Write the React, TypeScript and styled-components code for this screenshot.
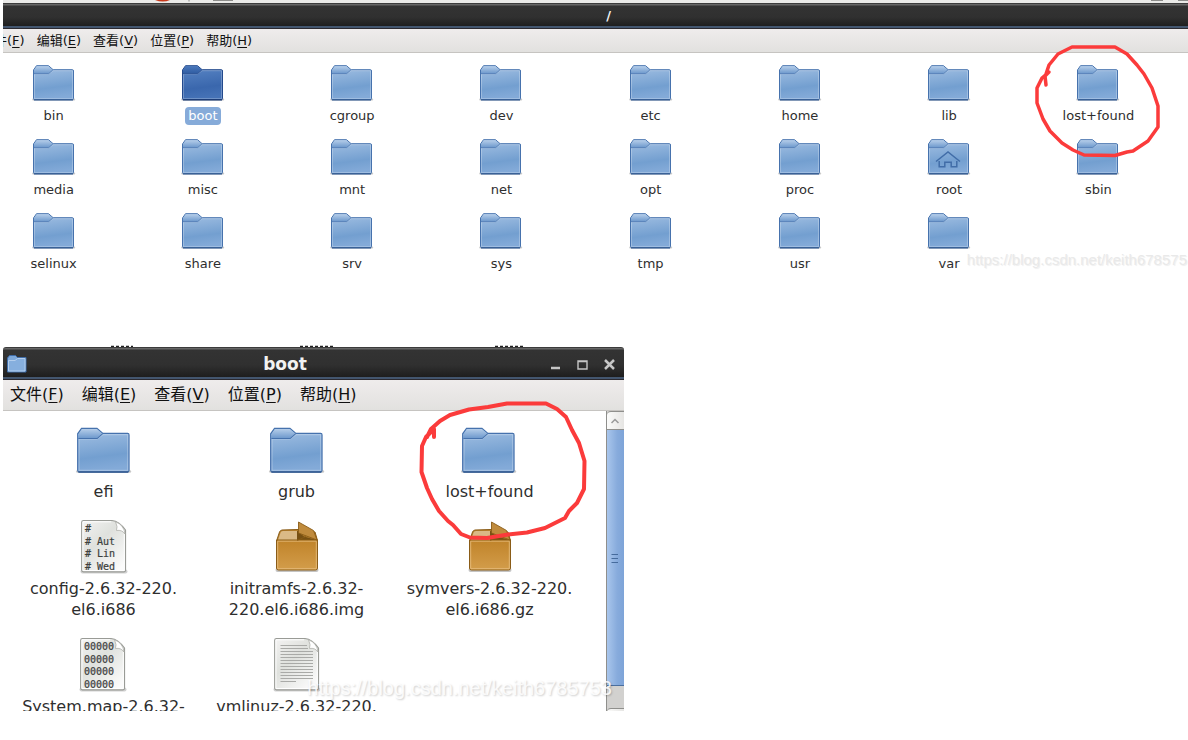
import React from 'react';
import styled, { createGlobalStyle, css } from 'styled-components';

const GlobalStyle = createGlobalStyle`
  * { box-sizing: border-box; }
  body {
    margin: 0;
    background: #fff;
    color: #2e2e2e;
    font-family: "DejaVu Sans", "Noto Sans CJK SC", sans-serif;
    overflow-x: hidden;
  }
  button { font: inherit; color: inherit; border: 0; padding: 0; background: none; }
  ul { list-style: none; margin: 0; padding: 0; }
  svg { display: block; }
`;

type Size = 'small' | 'large';

const Desktop = styled.main`
  padding-left: 3px;
`;

const PanelEdge = styled.div`
  height: 3px;
  background: #eaeae8;
  overflow: hidden;
`;

const Window = styled.section<{ $size: Size }>`
  position: relative;
  ${p => (p.$size === 'large' ? css`width: 52.4%;` : css`min-height: 344px;`)}
`;

const TitleBar = styled.header<{ $size: Size }>`
  display: flex;
  align-items: center;
  height: ${p => (p.$size === 'large' ? 33 : 26)}px;
  padding-left: ${p => (p.$size === 'large' ? 4 : 26)}px;
  border-top: 1px solid #3c3c3c;
  border-bottom: 1px solid #2c2a30;
  border-radius: ${p => (p.$size === 'large' ? '3px 3px 0 0' : 0)};
  background: linear-gradient(#666 0 1px, #333 2px, #303030 55%, #1b1b1b 100%);
  box-shadow: inset 0 -2px 0 #43566f;
  color: #f2f2f2;
`;

const Title = styled.h1<{ $size: Size }>`
  flex: 1;
  margin: 0;
  text-align: center;
  font-size: ${p => (p.$size === 'large' ? 17 : 13)}px;
  line-height: 24px;
  font-weight: bold;
`;

const WindowButtons = styled.div`
  display: flex;
`;

const WindowButton = styled.button`
  display: grid;
  place-items: center;
  width: 27px;
  height: 24px;
`;

const MenuBar = styled.nav<{ $size: Size }>`
  display: flex;
  align-items: center;
  overflow: hidden;
  gap: ${p => (p.$size === 'large' ? 18 : 12)}px;
  height: ${p => (p.$size === 'large' ? 31 : 24)}px;
  padding-left: ${p => (p.$size === 'large' ? 7 : 0)}px;
  background: linear-gradient(#efecec, #e2e1df);
  border-bottom: 1px solid #c6c4c1;
  font-size: ${p => (p.$size === 'large' ? 16 : 13)}px;
  color: #111;
`;

const MenuItem = styled.button`
  flex: none;
  line-height: 20px;
  white-space: nowrap;
`;

const MenuScroll = styled.div`
  display: flex;
  gap: inherit;
  margin-left: -22px;
`;

const Mnemonic = styled.u`
  text-underline-offset: 2px;
`;

const SmallGrid = styled.ul`
  display: grid;
  grid-template-columns: repeat(8, 1fr);
  row-gap: 14px;
  margin: 0 15px 0 -24px;
  padding-top: 12px;
`;

const SmallCell = styled.li`
  position: relative;
  display: flex;
  justify-content: center;
`;

const FileButton = styled.button<{ $size: Size }>`
  display: flex;
  flex-direction: column;
  align-items: center;
  gap: ${p => (p.$size === 'large' ? 0 : 6)}px;
`;

const SmallLabel = styled.span<{ $selected?: boolean }>`
  padding: 0 3px;
  border-radius: 4px;
  font-size: 13px;
  line-height: 18px;
  ${p => p.$selected && css`background: #86abd9; color: #fff;`}
`;

const LargeLabel = styled.span`
  font-size: 16px;
  line-height: 21px;
  white-space: pre-line;
`;

const Pane = styled.div`
  display: flex;
  height: 300px;
  overflow: hidden;
`;

const LargeGrid = styled.ul`
  flex: 1;
  display: grid;
  grid-template-columns: repeat(3, 193px);
  align-content: start;
  row-gap: 16px;
  padding: 10px 0 0 4px;
`;

const LargeCell = styled.li`
  display: flex;
  justify-content: center;
`;

const ScrollBar = styled.div`
  display: flex;
  flex-direction: column;
  width: 18px;
  border-left: 1px solid #8f8f8c;
  background: #d2d1cf;
`;

const ScrollArrow = styled.button`
  display: grid;
  place-items: center;
  flex: none;
  height: 19px;
  border-top: 1px solid #8f8f8c;
  border-bottom: 1px solid #8f8f8c;
  border-radius: 4px 0 0 0;
  background: linear-gradient(90deg, #fbfbfa, #e6e5e3);
`;

const ScrollThumb = styled.div`
  display: grid;
  place-items: center;
  flex: none;
  height: 256px;
  border-bottom: 1px solid #4b6f9f;
  background: linear-gradient(90deg, #a9c6ec, #87abdc 60%, #7ea4d8);
`;

const ScrollTrack = styled.div`
  flex: none;
  height: 22px;
`;

const Mark = styled.svg<{ $left: number; $top: number }>`
  position: absolute;
  z-index: 2;
  left: ${p => p.$left}px;
  top: ${p => p.$top}px;
  pointer-events: none;
`;

const Watermark = styled.span<{ $size: Size }>`
  position: absolute;
  white-space: nowrap;
  font-family: "Liberation Sans", sans-serif;
  pointer-events: none;
  ${p =>
    p.$size === 'large'
      ? css`right: 12px; bottom: 12px; font-size: 20px; line-height: 22px;
            color: rgba(255, 255, 255, 0.85); text-shadow: 1px 1px 2px rgba(0, 0, 0, 0.2);`
      : css`right: 1px; top: 248px; font-size: 15px; line-height: 18px;
            color: #e9e9e9; text-shadow: 1px 1px 1px #eee;`}
`;

const FolderIcon = ({ size = 'small', active, home }: { size?: Size; active?: boolean; home?: boolean }) => {
  const id = `folder-${size}-${active ? 'on' : 'off'}`;
  const stroke = active ? '#23498c' : '#4672ad';
  return (
    <svg width={size === 'large' ? 60 : 44} height={size === 'large' ? 60 : 36}
      viewBox={size === 'large' ? '-1.4 -5 46.8 46.8' : '0 0 44 36'} aria-hidden="true">
      <defs>
        <linearGradient id={`${id}-body`} x1="0" y1="0" x2="0.15" y2="1">
          <stop offset="0" stopColor={active ? '#5b87c6' : '#a5c2e4'} />
          <stop offset="0.7" stopColor={active ? '#3a67ad' : '#739fd0'} />
          <stop offset="1" stopColor={active ? '#4572b6' : '#83aad8'} />
        </linearGradient>
        <linearGradient id={`${id}-tab`} x1="0" y1="0" x2="0" y2="1">
          <stop offset="0" stopColor={active ? '#4a78bb' : '#b5cde9'} />
          <stop offset="1" stopColor={active ? '#2f5ca2' : '#6c98cc'} />
        </linearGradient>
      </defs>
      <rect x="0.2" y="33.4" width="43" height="2" rx="1" fill="#777" opacity="0.4" />
      <path d="M1.5 33.5V5l3-4.3H16.5l4.6 4H40.5Q41.5 4.7 41.5 6V33.5Q41.5 34.6 40.5 34.6H2.5Q1.5 34.6 1.5 33.5Z"
        fill={`url(#${id}-body)`} stroke={stroke} />
      <path d="M2.5 9V33.6H40.5V5.7H21L16.5 9Z" fill="none" stroke="#fff" strokeOpacity="0.25" />
      <path d="M2 8.6V5.3L4.8 1.2H16.3L20.5 4.8 16.7 8.6Z" fill={`url(#${id}-tab)`} />
      <path d="M2 8.7H16.7L20.8 5" fill="none" stroke={stroke} strokeWidth="0.8" />
      <path d="M2 34.8H41" stroke={active ? '#17366e' : '#30588f'} strokeWidth="1.2" />
      {home && (
        <g fill="none" stroke="#416da8" strokeWidth="1.5">
          <path d="M9 22.5L21 13L33 22.5" />
          <path d="M12.2 22V27.8H17.8V23.2H24.2V27.8H29.8V22" />
        </g>
      )}
    </svg>
  );
};

const DocumentIcon = ({ lines }: { lines?: string[] }) => (
  <svg width="60" height="60" viewBox="0 0 60 60" aria-hidden="true">
    <defs>
      <linearGradient id="paper" x1="0" y1="0" x2="0.8" y2="1">
        <stop offset="0" stopColor="#f3f3f2" />
        <stop offset="0.45" stopColor="#dfe1dd" />
        <stop offset="1" stopColor="#fbfbfb" />
      </linearGradient>
    </defs>
    <rect x="6.5" y="51.5" width="47" height="4" rx="2" fill="#777" opacity="0.35" />
    <path d="M9.5 2.5H38Q45 3 51.5 12V52Q51.5 53.8 50 53.8H9.5Q7.7 53.8 7.7 52V4.3Q7.7 2.5 9.5 2.5Z"
      fill="url(#paper)" stroke="#999b96" strokeWidth="1.2" />
    <path d="M8.9 52.5V3.8H37M50.3 16V52.5H8.9" fill="none" stroke="#fff" />
    <path d="M41.5 3.8Q44 9 42.5 12.5Q48 11.5 51 16Q50 7 41.5 3.8Z" fill="#fff" stroke="#b0b1ac" strokeWidth="0.8" />
    {lines ? (
      <g fill="#3c3f3d" fontFamily="DejaVu Sans Mono, monospace" fontSize="10" stroke="#3c3f3d" strokeWidth="0.2">
        {lines.map((line, i) => <text key={i} x="11" y={[14, 27, 39, 52][i]}>{line}</text>)}
      </g>
    ) : (
      <path d="M13.5 9.5H40M13.5 12.5H41M13.5 15.5H46M13.5 18.5H46M13.5 21.5H46M13.5 24.5H46M13.5 27.5H46M13.5 30.5H46M13.5 33.5H46M13.5 36.5H46M13.5 39.5H46M13.5 42.5H46M13.5 45.5H29"
        fill="none" stroke="#a9aaa7" />
    )}
  </svg>
);

const PackageIcon = () => (
  <svg width="60" height="60" viewBox="0 0 60 60" aria-hidden="true">
    <defs>
      <linearGradient id="carton" x1="0" y1="0" x2="0" y2="1">
        <stop offset="0" stopColor="#c08329" />
        <stop offset="1" stopColor="#d39d4b" />
      </linearGradient>
    </defs>
    <rect x="8.5" y="50" width="43" height="4" rx="2" fill="#555" opacity="0.35" />
    <path d="M9.7 22.5L12.5 14Q13.2 12.3 15 12L31 11.5L48 14L50.5 22.5Z" fill="#b9822f" stroke="#8a5c17" />
    <path d="M11 22L13.6 14.5Q14 13 16 13H30V22Z" fill="#dab986" />
    <path d="M30 12.5V22H49.5L37 18.5Z" fill="#775013" />
    <path d="M31.5 4L46.5 12.5L50 22L31.5 15Z" fill="#c08b3d" stroke="#8a5c17" strokeWidth="0.9" />
    <path d="M9.5 22H50.5V50Q50.5 52 48.5 52H11.5Q9.5 52 9.5 50Z" fill="url(#carton)" stroke="#8a5c17" />
    <path d="M10.7 23.2H49.3V50.7H10.7Z" fill="none" stroke="#ecc68b" strokeOpacity="0.7" />
    <path d="M30 22.5L39 18.5" stroke="#8a5c17" strokeWidth="0.8" />
  </svg>
);

const menus: [string, string][] = [
  ['文件', 'F'],
  ['编辑', 'E'],
  ['查看', 'V'],
  ['位置', 'P'],
  ['帮助', 'H'],
];

const menuItems = menus.map(([name, key]) => (
  <MenuItem key={key} type="button">{name}(<Mnemonic>{key}</Mnemonic>)</MenuItem>
));

const rootFolders = [
  'bin', 'boot', 'cgroup', 'dev', 'etc', 'home', 'lib', 'lost+found',
  'media', 'misc', 'mnt', 'net', 'opt', 'proc', 'root', 'sbin',
  'selinux', 'share', 'srv', 'sys', 'tmp', 'usr', 'var',
];

const bootFiles: { name: string; icon: React.ReactNode }[] = [
  { name: 'efi', icon: <FolderIcon size="large" /> },
  { name: 'grub', icon: <FolderIcon size="large" /> },
  { name: 'lost+found', icon: <FolderIcon size="large" /> },
  { name: 'config-2.6.32-220.\nel6.i686', icon: <DocumentIcon lines={['#', '# Aut', '# Lin', '# Wed']} /> },
  { name: 'initramfs-2.6.32-\n220.el6.i686.img', icon: <PackageIcon /> },
  { name: 'symvers-2.6.32-220.\nel6.i686.gz', icon: <PackageIcon /> },
  { name: 'System.map-2.6.32-', icon: <DocumentIcon lines={['00000', '00000', '00000', '00000']} /> },
  { name: 'vmlinuz-2.6.32-220.', icon: <DocumentIcon /> },
];

const SmallCircle = () => (
  <Mark $left={8} $top={-23} width="132" height="118" viewBox="1032 42 132 118" aria-hidden="true">
    <path d="M1046 85L1045 76L1049 72L1042 78L1037 88L1037 103L1043 119L1050 131L1062 143L1073 150L1084 155L1115 155.5L1127 152L1133 151L1148 141L1158 127L1158 106L1152 88L1144 74L1137 65L1127 54L1115 47L1072 47L1058 54L1049 65L1045 77"
      fill="none" stroke="#fb3b3b" strokeWidth="3.5" strokeLinecap="round" strokeLinejoin="round" />
  </Mark>
);

const LargeCircle = () => (
  <Mark $left={412} $top={49} width="176" height="148" viewBox="415 396 176 148" aria-hidden="true">
    <path d="M434 437L434 429L426 437L422 446L421.5 472L427 488L432 499L439 511L448 521L453 525L461 534L470 537.5L487 538L508 534.5L527 532.5L545 528L565 518L569 511L577 503L584 489L584.5 461L579 443L572 430L566 417L557 409L546 403.5L507 403.5L488 407L469 409.5L450 415L440 421L431 429L427 437"
      fill="none" stroke="#fb3b3b" strokeWidth="4" strokeLinecap="round" strokeLinejoin="round" />
  </Mark>
);

const CutLabels = () => (
  <Mark $left={104} $top={-2} width="420" height="2" viewBox="107 0 420 2" aria-hidden="true">
    <path d="M111 1.5H133M300 1.5H334M495 1.5H524" stroke="#222" strokeWidth="1.5" strokeDasharray="3 2" />
  </Mark>
);

export default function App() {
  return (
    <>
      <GlobalStyle />
      <Desktop>
        <PanelEdge>
          <svg width="1185" height="3" viewBox="3 0 1185 3" aria-hidden="true">
            <path d="M155 0H170Q163 3 155 0Z" fill="#c8391b" />
            <path d="M189 0V1.5M213 0.5H233M1151 0.5H1163M1178 0.5H1188" stroke="#8c8c8a" />
          </svg>
        </PanelEdge>
        <Window $size="small" aria-label="/">
          <TitleBar $size="small"><Title $size="small">/</Title></TitleBar>
          <MenuBar $size="small"><MenuScroll>{menuItems}</MenuScroll></MenuBar>
          <SmallGrid>
            {rootFolders.map(name => (
              <SmallCell key={name}>
                <FileButton type="button" $size="small">
                  <FolderIcon active={name === 'boot'} home={name === 'root'} />
                  <SmallLabel $selected={name === 'boot'}>{name}</SmallLabel>
                </FileButton>
                {name === 'lost+found' && <SmallCircle />}
              </SmallCell>
            ))}
          </SmallGrid>
          <Watermark $size="small">https://blog.csdn.net/keith678575</Watermark>
        </Window>
        <Window $size="large" aria-label="boot">
          <CutLabels />
          <TitleBar $size="large">
            <svg width="20" height="18" viewBox="0 0 20 18" aria-hidden="true">
              <path d="M0.5 17V3L2.5 0.5H8.5L10.5 2.5H19V17Z" fill="#7da8da" stroke="#3f6ca8" />
              <path d="M1.5 16V5.5H8L10.5 3.5H18V16Z" fill="#86afde" stroke="#b3cdec" />
            </svg>
            <Title $size="large">boot</Title>
            <WindowButtons>
              <WindowButton type="button" aria-label="最小化">
                <svg width="12" height="12" viewBox="0 0 12 12"><path d="M1 10H10" stroke="#c6c6c6" strokeWidth="2.5" /></svg>
              </WindowButton>
              <WindowButton type="button" aria-label="最大化">
                <svg width="12" height="12" viewBox="0 0 12 12"><path d="M1 3H10V11H1ZM0.5 3.5H10.5" fill="none" stroke="#c6c6c6" strokeWidth="1.4" /></svg>
              </WindowButton>
              <WindowButton type="button" aria-label="关闭">
                <svg width="12" height="12" viewBox="0 0 12 12"><path d="M1 2L10 11M10 2L1 11" stroke="#c6c6c6" strokeWidth="2.5" /></svg>
              </WindowButton>
            </WindowButtons>
          </TitleBar>
          <MenuBar $size="large">{menuItems}</MenuBar>
          <Pane>
            <LargeGrid>
              {bootFiles.map(file => (
                <LargeCell key={file.name}>
                  <FileButton type="button" $size="large">
                    {file.icon}
                    <LargeLabel>{file.name}</LargeLabel>
                  </FileButton>
                </LargeCell>
              ))}
            </LargeGrid>
            <ScrollBar>
              <ScrollArrow type="button" aria-label="向上滚动">
                <svg width="8" height="6" viewBox="0 0 8 6"><path d="M0.5 5L4 1.5L7.5 5" fill="none" stroke="#999" strokeWidth="1.5" /></svg>
              </ScrollArrow>
              <ScrollThumb>
                <svg width="8" height="10" viewBox="0 0 8 10"><path d="M0.5 1.5H7M0.5 5.5H7M0.5 9.5H7" stroke="#466b9c" /></svg>
              </ScrollThumb>
              <ScrollTrack />
              <ScrollArrow type="button" aria-label="向下滚动" />
            </ScrollBar>
          </Pane>
          <LargeCircle />
          <Watermark $size="large">https://blog.csdn.net/keith6785753</Watermark>
        </Window>
      </Desktop>
    </>
  );
}
